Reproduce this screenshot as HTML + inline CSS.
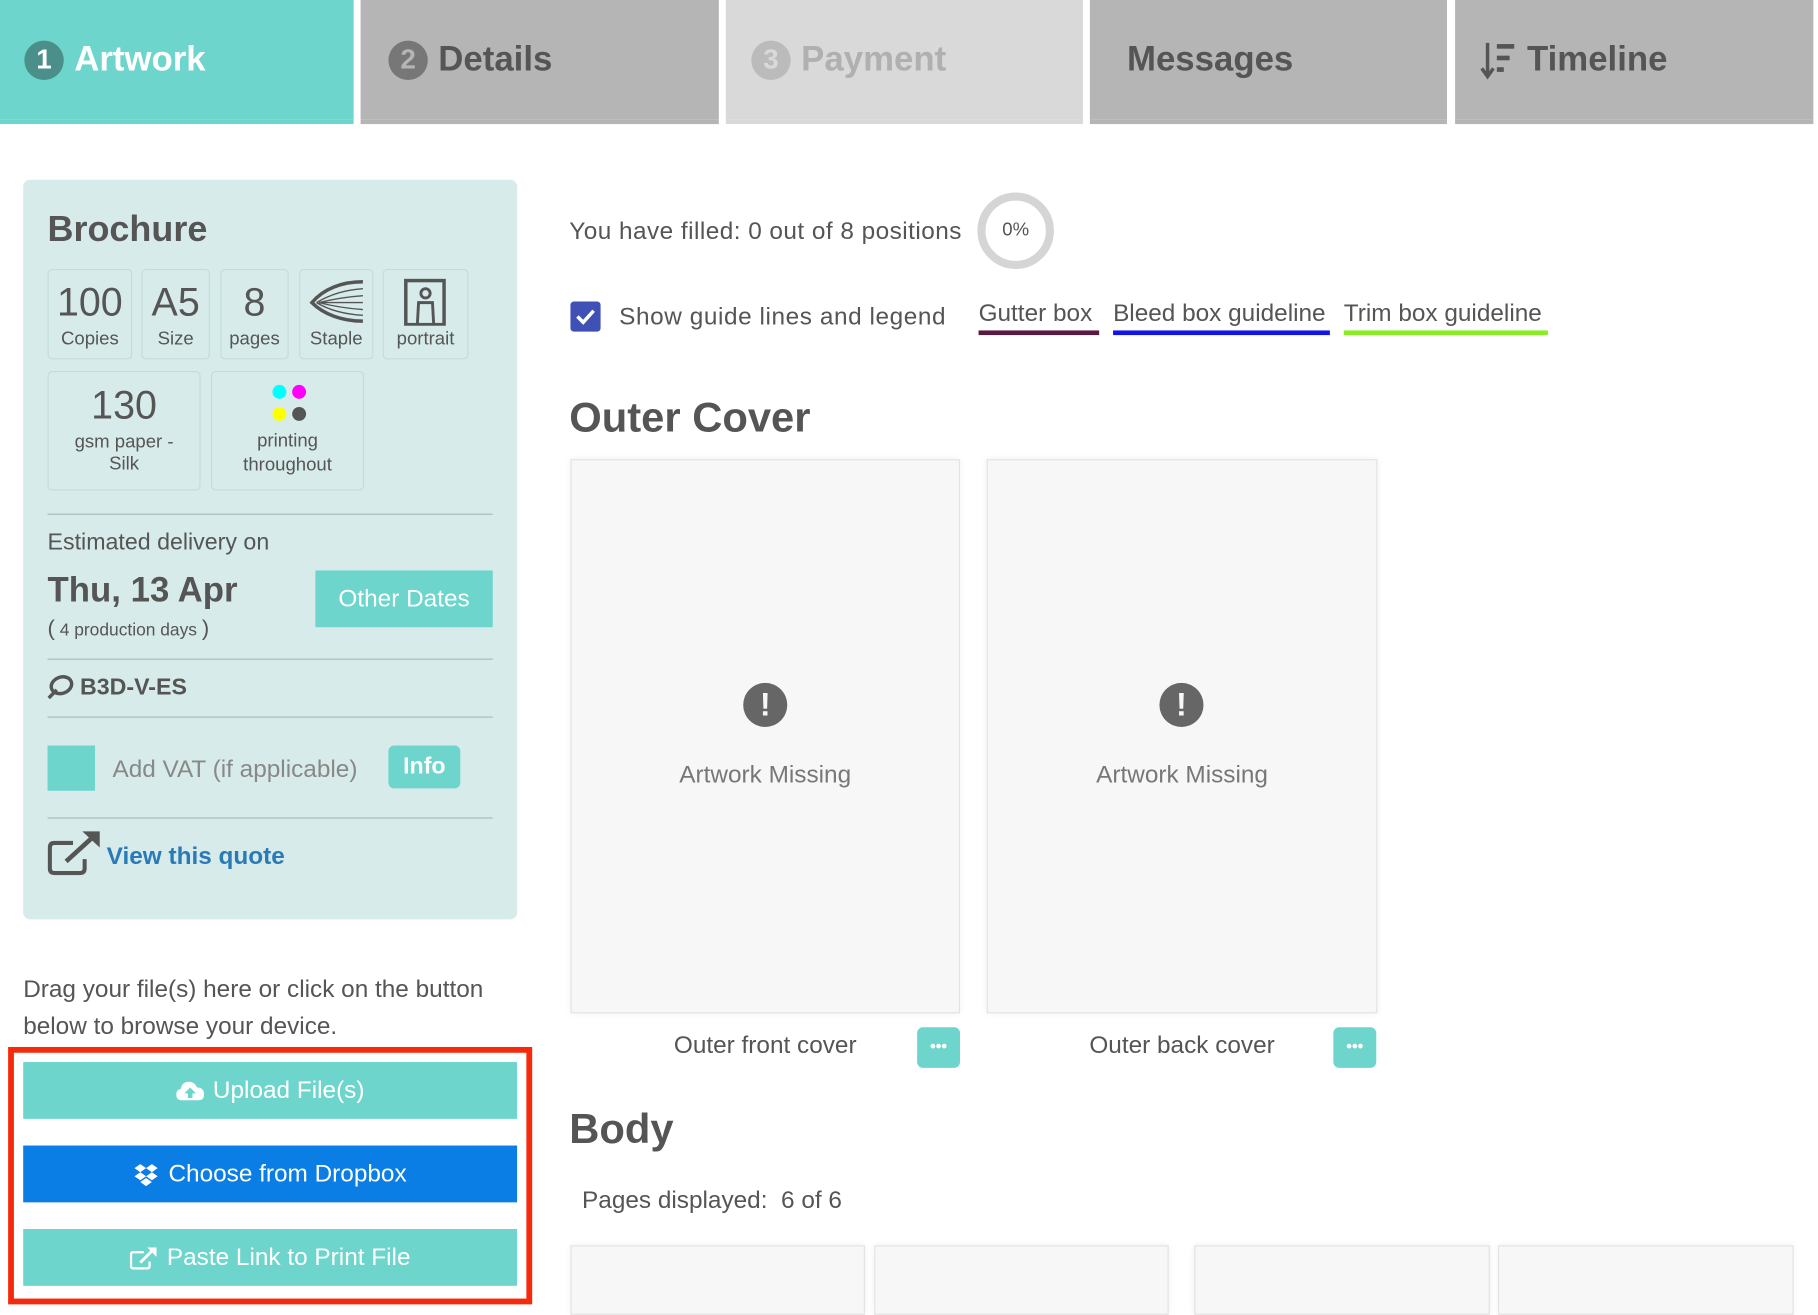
<!DOCTYPE html>
<html><head><meta charset="utf-8"><style>
*{box-sizing:border-box;margin:0;padding:0}
html,body{width:1818px;height:1302px;overflow:hidden;background:#fff}
#w{position:absolute;left:0;top:0;width:1568px;height:1123px;transform:scale(1.15944);transform-origin:0 0;font-family:"Liberation Sans",sans-serif;color:#555}
.a{position:absolute;white-space:nowrap}
.tab{position:absolute;top:0;height:103px;font-size:30px;font-weight:bold;display:flex;align-items:center}
.num{display:inline-block;width:34px;height:34px;border-radius:50%;font-size:24px;text-align:center;line-height:34px;margin-right:9px}
.box{position:absolute;border:1px solid #c3dcd9;border-radius:4px;text-align:center;color:#555}
.hr{position:absolute;left:41px;width:384px;height:1px;background:#aab9b7}
.btn{position:absolute;left:20px;width:426px;height:49px;color:#fff;font-size:21px;display:flex;align-items:center;justify-content:center;gap:8px}
.card{position:absolute;background:#f7f7f7;border:1px solid #e3e3e3;box-shadow:0 0 6px rgba(0,0,0,.06)}
.ex{position:absolute;width:38px;height:38px;border-radius:50%;background:#666;color:#f7f7f7;font-weight:bold;font-size:28px;text-align:center;line-height:38px}
.dots{position:absolute;width:37px;height:35px;background:#6dd5cc;border-radius:5px;color:#fff;text-align:center;font-size:14px;line-height:32px;font-weight:bold}
</style></head><body><div id="w">
<div class="tab" style="left:0;width:305px;background:#6dd5cc;color:#fff;padding-left:21px"><span class="num" style="background:#4a8f89;color:#fff">1</span>Artwork</div>
<div class="tab" style="left:311px;width:309px;background:#b5b5b5;color:#555;padding-left:24px"><span class="num" style="background:#777;color:#b5b5b5">2</span>Details</div>
<div class="tab" style="left:626px;width:308px;background:#d9d9d9;color:#b0b0b0;padding-left:22px"><span class="num" style="background:#bbb;color:#d9d9d9">3</span>Payment</div>
<div class="tab" style="left:940px;width:308px;background:#b5b5b5;color:#555;padding-left:32px">Messages</div>
<div class="tab" style="left:1255px;width:309px;background:#b5b5b5;color:#555;padding-left:22px"><svg width="32" height="34" viewBox="0 0 32 34" style="margin-right:8px"><path d="M6 2v28M1 24l5 7 5-7" stroke="#555" stroke-width="3" fill="none"/><rect x="14" y="3" width="15" height="4" fill="#555"/><rect x="14" y="13" width="11" height="4" fill="#555"/><rect x="14" y="23" width="6" height="4" fill="#555"/></svg>Timeline</div>
<div class="a" style="left:0;top:103px;width:1568px;height:4px;background:#fff"></div>
<div class="a" style="left:0;top:103px;width:305px;height:4px;background:#6dd5cc"></div>
<div class="a" style="left:311px;top:103px;width:309px;height:4px;background:#b5b5b5"></div>
<div class="a" style="left:626px;top:103px;width:308px;height:4px;background:#d9d9d9"></div>
<div class="a" style="left:940px;top:103px;width:308px;height:4px;background:#b5b5b5"></div>
<div class="a" style="left:1255px;top:103px;width:309px;height:4px;background:#b5b5b5"></div>

<div class="a" style="left:20px;top:155px;width:426px;height:638px;background:#d7ecea;border-radius:6px"></div>
<div class="a" style="left:41px;top:180px;font-size:31px;font-weight:bold">Brochure</div>
<div class="box" style="left:41px;top:232px;width:73px;height:78px"><div style="font-size:34px;margin-top:9px">100</div><div style="font-size:16px;margin-top:3px">Copies</div></div>
<div class="box" style="left:122px;top:232px;width:59px;height:78px"><div style="font-size:34px;margin-top:9px">A5</div><div style="font-size:16px;margin-top:3px">Size</div></div>
<div class="box" style="left:190px;top:232px;width:59px;height:78px"><div style="font-size:34px;margin-top:9px">8</div><div style="font-size:16px;margin-top:3px">pages</div></div>
<div class="box" style="left:258px;top:232px;width:64px;height:78px"><svg width="50" height="40" viewBox="0 0 50 40" style="margin-top:6px"><path d="M48 4C30 4 14 10 4 22C14 32 30 38 48 38" stroke="#555" stroke-width="3" fill="none"/><path d="M48 10C32 11 18 16 8 22M48 16C34 17 22 19 10 22M48 22H10M48 28C34 27 22 25 10 22M48 33C32 32 18 28 8 22" stroke="#555" stroke-width="1.2" fill="none"/></svg><div style="font-size:16px;margin-top:0px">Staple</div></div>
<div class="box" style="left:330px;top:232px;width:74px;height:78px"><svg width="40" height="42" viewBox="0 0 40 42" style="margin-top:6px"><rect x="3" y="3" width="33" height="38" stroke="#555" stroke-width="3" fill="none"/><circle cx="20" cy="14" r="4" stroke="#555" stroke-width="2.5" fill="none"/><path d="M13 40L14 22H26L27 40" stroke="#555" stroke-width="2.5" fill="none"/></svg><div style="font-size:16px;margin-top:-2px">portrait</div></div>
<div class="box" style="left:41px;top:320px;width:132px;height:103px"><div style="font-size:34px;margin-top:10px">130</div><div style="font-size:16px;line-height:19px;margin-top:2px">gsm paper -<br>Silk</div></div>
<div class="box" style="left:182px;top:320px;width:132px;height:103px"><svg width="40" height="40" viewBox="0 0 40 40" style="margin-top:7px"><circle cx="13" cy="10" r="6" fill="#0ff"/><circle cx="30" cy="10" r="6" fill="#f0f"/><circle cx="13" cy="29" r="6" fill="#ff0"/><circle cx="30" cy="29" r="6" fill="#555"/></svg><div style="font-size:16px;line-height:21px;margin-top:-3px">printing<br>throughout</div></div>
<div class="hr" style="top:443px"></div>
<div class="a" style="left:41px;top:457px;font-size:20px">Estimated delivery on</div>
<div class="a" style="left:41px;top:493px;font-size:30px;font-weight:bold">Thu, 13 Apr</div>
<div class="a" style="left:41px;top:532px;font-size:15px"><span style="font-size:19px">(</span> 4 production days <span style="font-size:19px">)</span></div>
<div class="a" style="left:272px;top:492px;width:153px;height:49px;background:#6dd5cc;color:#fff;font-size:21px;text-align:center;line-height:49px">Other Dates</div>
<div class="hr" style="top:568px"></div>
<svg class="a" style="left:41px;top:581px" width="24" height="22" viewBox="0 0 24 22"><ellipse cx="12" cy="10" rx="9" ry="7" stroke="#555" stroke-width="3" fill="none" transform="rotate(-20 12 10)"/><path d="M1 21L8 14" stroke="#555" stroke-width="3"/></svg>
<div class="a" style="left:69px;top:582px;font-size:20px;font-weight:bold">B3D-V-ES</div>
<div class="hr" style="top:618px"></div>
<div class="a" style="left:41px;top:643px;width:41px;height:39px;background:#6dd5cc"></div>
<div class="a" style="left:97px;top:652px;font-size:21px;color:#888">Add VAT (if applicable)</div>
<div class="a" style="left:335px;top:643px;width:62px;height:37px;background:#6dd5cc;border-radius:5px;color:#fff;font-size:20px;font-weight:bold;text-align:center;line-height:36px">Info</div>
<div class="hr" style="top:705px"></div>
<svg class="a" style="left:41px;top:715px" width="46" height="40" viewBox="0 0 46 40"><path d="M22 12H6Q2 12 2 16V34Q2 38 6 38H28Q32 38 32 34V26" stroke="#555" stroke-width="3.5" fill="none"/><path d="M16 28L38 8" stroke="#555" stroke-width="4" fill="none"/><path d="M30 2H45V16Z" fill="#555"/></svg>
<div class="a" style="left:92px;top:727px;font-size:21px;color:#2a7ab8;font-weight:bold">View this quote</div>

<div class="a" style="left:20px;top:838px;font-size:21px;line-height:32px">Drag your file(s) here or click on the button<br>below to browse your device.</div>
<div class="a" style="left:7px;top:903px;width:452px;height:222px;border:5px solid #f52a0c"></div>
<div class="btn" style="top:916px;background:#6dd5cc"><svg width="24" height="18" viewBox="0 0 24 18"><path d="M5 17Q0 17 0 12Q0 8 4 7Q5 1 11 1Q16 1 18 6Q24 6 24 12Q24 17 19 17Z" fill="#fff"/><path d="M12 6L7 11H10V15H14V11H17Z" fill="#6dd5cc"/></svg>Upload File(s)</div>
<div class="btn" style="top:988px;background:#0a7ee4"><svg width="22" height="20" viewBox="0 0 22 20"><path d="M6 1L1 4.5 6 8 11 4.5ZM16 1L11 4.5 16 8 21 4.5ZM1 11.5L6 15 11 11.5 6 8ZM21 11.5L16 8 11 11.5 16 15ZM6 16.5L11 20 16 16.5 11 13Z" fill="#fff"/></svg>Choose from Dropbox</div>
<div class="btn" style="top:1060px;background:#6dd5cc"><svg width="24" height="20" viewBox="0 0 24 20"><path d="M12 5H3Q1 5 1 7V17Q1 19 3 19H15Q17 19 17 17V13" stroke="#fff" stroke-width="2" fill="none"/><path d="M9 14L20 3" stroke="#fff" stroke-width="2.5"/><path d="M15 1H23V9Z" fill="#fff"/></svg>Paste Link to Print File</div>

<div class="a" style="left:491px;top:188px;font-size:21px;letter-spacing:.4px">You have filled: 0 out of 8 positions</div>
<div class="a" style="left:843px;top:166px;width:66px;height:66px;border:7px solid #d5d5d5;border-radius:50%;font-size:16px;text-align:center;line-height:52px">0%</div>
<div class="a" style="left:492px;top:260px;width:26px;height:26px;background:#3f51b5;border-radius:3px"><svg width="26" height="26" viewBox="0 0 26 26"><path d="M6 13L11 18 20 8" stroke="#fff" stroke-width="3" fill="none"/></svg></div>
<div class="a" style="left:534px;top:262px;font-size:21px;letter-spacing:.5px">Show guide lines and legend</div>
<div class="a" style="left:844px;top:259px;font-size:21px;border-bottom:4px solid #5a1a40;padding-bottom:2px;width:104px">Gutter box</div>
<div class="a" style="left:960px;top:259px;font-size:21px;border-bottom:4px solid #1212ee;padding-bottom:2px;width:187px">Bleed box guideline</div>
<div class="a" style="left:1159px;top:259px;font-size:21px;border-bottom:4px solid #88ee22;padding-bottom:2px;width:176px">Trim box guideline</div>
<div class="a" style="left:491px;top:339px;font-size:36px;font-weight:bold">Outer Cover</div>
<div class="card" style="left:492px;top:396px;width:336px;height:478px"></div>
<div class="card" style="left:851px;top:396px;width:337px;height:478px"></div>
<div class="ex" style="left:641px;top:589px">!</div>
<div class="ex" style="left:1000px;top:589px">!</div>
<div class="a" style="left:492px;top:657px;width:336px;text-align:center;font-size:21px;color:#777">Artwork Missing</div>
<div class="a" style="left:851px;top:657px;width:337px;text-align:center;font-size:21px;color:#777">Artwork Missing</div>
<div class="a" style="left:492px;top:890px;width:336px;text-align:center;font-size:21px">Outer front cover</div>
<div class="a" style="left:851px;top:890px;width:337px;text-align:center;font-size:21px">Outer back cover</div>
<div class="dots" style="left:791px;top:886px">•••</div>
<div class="dots" style="left:1150px;top:886px">•••</div>
<div class="a" style="left:491px;top:953px;font-size:36px;font-weight:bold">Body</div>
<div class="a" style="left:502px;top:1024px;font-size:21px">Pages displayed:&nbsp; 6 of 6</div>
<div class="card" style="left:492px;top:1074px;width:254px;height:60px"></div>
<div class="card" style="left:754px;top:1074px;width:254px;height:60px"></div>
<div class="card" style="left:1030px;top:1074px;width:255px;height:60px"></div>
<div class="card" style="left:1292px;top:1074px;width:255px;height:60px"></div>
</div></body></html>
